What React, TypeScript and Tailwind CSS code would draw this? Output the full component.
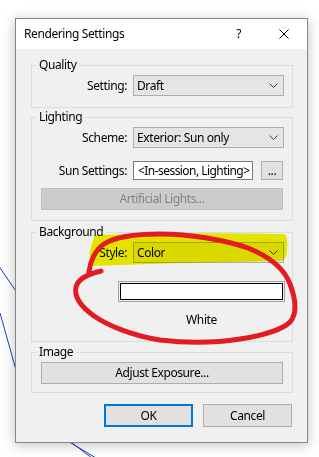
import React from "react";

function Chevron() {
  return (
    <svg width="9" height="5" viewBox="0 0 9 5" className="shrink-0">
      <path d="M0.5 0.5 L4.5 4.5 L8.5 0.5" fill="none" stroke="#444" strokeWidth="1" />
    </svg>
  );
}

function Combo({ value }: { value: string }) {
  return (
    <div className="flex h-[21px] w-[151px] items-center justify-between border border-[#adadad] bg-[#e5e5e5] pl-[3px] pr-[5px]">
      <span className="leading-[16px]">{value}</span>
      <Chevron />
    </div>
  );
}

function Row({ label, children }: { label: string; children: React.ReactNode }) {
  return (
    <div className="flex items-center gap-[6px]">
      <span className="w-[86px] whitespace-nowrap text-right leading-[16px]">{label}</span>
      {children}
    </div>
  );
}

function Group({ title, className, children }: { title: string; className?: string; children: React.ReactNode }) {
  return (
    <fieldset className={`border border-[#dcdcdc] pl-[9px] pr-[8px] ${className ?? ""}`}>
      <legend className="-ml-[5px] px-[3px] leading-[16px]">{title}</legend>
      {children}
    </fieldset>
  );
}

export default function App() {
  return (
    <div className="relative h-[457px] w-[319px] overflow-hidden bg-white font-['Noto_Sans',sans-serif] text-[12px] tracking-[-0.4px] text-black">
      {/* drawing lines behind the dialog */}
      <svg className="absolute inset-0" width="319" height="457">
        <path d="M-4 262 L22 300" stroke="#1c3fc4" strokeWidth="1" fill="none" />
        <path d="M0 313 L16 370" stroke="#1c3fc4" strokeWidth="1" fill="none" />
        <path d="M66 440 L96 458" stroke="#1c3fc4" strokeWidth="1" fill="none" />
        <path d="M68 440 L92 458" stroke="#1c3fc4" strokeWidth="1" fill="none" />
      </svg>

      <div className="relative ml-[15px] mt-[18px] w-[293px] border border-[#858585] bg-[#f0f0f0] shadow-[0_2px_12px_rgba(0,0,0,0.25)]">
        {/* title bar */}
        <div className="flex h-[30px] items-center bg-white pl-[8px]">
          <span className="flex-1 leading-[16px]">Rendering Settings</span>
          <span className="mr-[38px] leading-[16px]">?</span>
          <svg width="10" height="10" viewBox="0 0 10 10" className="mr-[18px]">
            <path d="M0.5 0.5 L9.5 9.5 M9.5 0.5 L0.5 9.5" stroke="#000" strokeWidth="1" />
          </svg>
        </div>

        <div className="flex flex-col pb-[15px] pl-[15px] pr-[14px]">
          <Group title="Quality" className="mt-[8px] pb-[11px] pt-[2px]">
            <Row label="Setting:">
              <Combo value="Draft" />
            </Row>
          </Group>

          <Group title="Lighting" className="mt-[1px] pb-[10px] pt-[2px]">
            <Row label="Scheme:">
              <Combo value="Exterior: Sun only" />
            </Row>
            <div className="mt-[13px]">
              <Row label="Sun Settings:">
                <div className="flex h-[19px] w-[120px] items-center overflow-hidden whitespace-nowrap border border-[#7a7a7a] bg-white pl-[4px] leading-[16px] tracking-[-0.55px]">
                  &lt;In-session, Lighting&gt;
                </div>
                <button className="ml-[2px] flex h-[19px] w-[22px] items-center justify-center border border-[#adadad] bg-[#e1e1e1] leading-[16px]">
                  ...
                </button>
              </Row>
            </div>
            <div className="mt-[8px] flex h-[22px] w-[242px] items-center justify-center border border-[#bfbfbf] bg-[#cccccc] text-[#838383]">
              Artificial Lights...
            </div>
          </Group>

          <Group title="Background" className="mt-[3px] pb-[13px] pt-[2px]">
            <Row label="Style:">
              <Combo value="Color" />
            </Row>
            <div className="ml-auto mr-[-1px] flex w-[167px] flex-col">
              <div className="mt-[18px] h-[21px] border border-[#a0a0a0] p-[1px]">
                <div className="h-full w-full border border-black bg-white" />
              </div>
              <span className="mt-[10px] text-center leading-[16px]">White</span>
            </div>
          </Group>

          <Group title="Image" className="mt-[2px] pb-[8px] pt-[2px]">
            <button className="flex h-[22px] w-[242px] items-center justify-center border border-[#adadad] bg-[#e1e1e1]">
              Adjust Exposure...
            </button>
          </Group>

          <div className="mt-[11px] flex justify-end gap-[10px] pr-[1px]">
            <button className="h-[23px] w-[89px] border-2 border-[#0078d7] bg-[#e1e1e1]">OK</button>
            <button className="h-[23px] w-[89px] border border-[#adadad] bg-[#e1e1e1]">Cancel</button>
          </div>
        </div>
      </div>

      {/* annotations drawn over the dialog */}
      <svg className="pointer-events-none absolute inset-0" width="319" height="457">
        <path
          d="M95 235 Q180 232 284 234 Q288 236 287 250 Q287 260 280 261 L180 263 L91 266 Q86 258 95 235 Z"
          fill="#f2f200"
          style={{ mixBlendMode: "multiply" }}
        />
        <path
          d="M89 272 C90 262 95 250 104 244 C115 237 135 234 160 234 C190 234 225 240 248 248 C268 256 284 268 290 284 C296 300 297 314 290 322 C282 330 260 336 240 339 C215 343 185 343 160 340 C135 336 110 327 94 316 C80 306 74 296 76 287 C78 279 88 274 101 271"
          fill="none"
          stroke="#e31b23"
          strokeWidth="5"
          strokeLinecap="round"
          strokeLinejoin="round"
        />
      </svg>
    </div>
  );
}
